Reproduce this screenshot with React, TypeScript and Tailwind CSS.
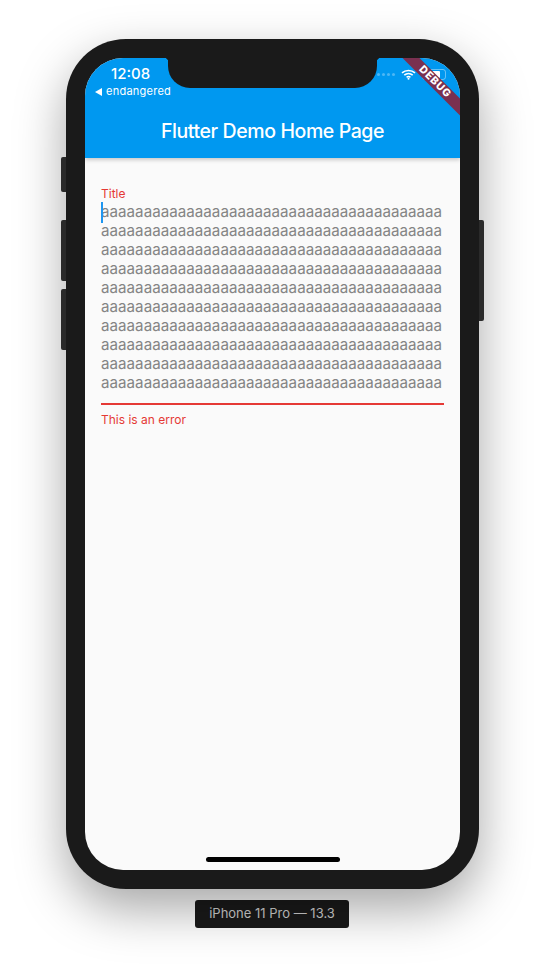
const rows = Array.from({ length: 10 }, () => "a".repeat(40));

function Wifi() {
  return (
    <svg width="15" height="11" viewBox="0 0 15 11" fill="none" stroke="white" strokeWidth="1.6">
      <path d="M1 3.9C4.6.6 10.4.6 14 3.9" />
      <path d="M3.3 6.2c2.4-2.1 6-2.1 8.4 0" />
      <path d="M5.6 8.3c1.1-.9 2.7-.9 3.8 0" />
      <circle cx="7.5" cy="9.7" r="1" fill="white" stroke="none" />
    </svg>
  );
}

export default function App() {
  return (
    <div className="relative h-[964px] w-[545px] overflow-hidden bg-white pl-[66px] pt-[39px] font-['Inter',sans-serif]">
      <div className="relative h-[850px] w-[413px] rounded-[60px] bg-[#1a1a1a] p-[19px] shadow-[0_20px_50px_rgba(0,0,0,0.35)]">
        {/* side buttons */}
        <div className="absolute -left-[5px] top-[118px] h-[35px] w-[5px] rounded-l-[2px] bg-[#2a2a2a]" />
        <div className="absolute -left-[5px] top-[181px] h-[61px] w-[5px] rounded-l-[2px] bg-[#2a2a2a]" />
        <div className="absolute -left-[5px] top-[250px] h-[61px] w-[5px] rounded-l-[2px] bg-[#2a2a2a]" />
        <div className="absolute -right-[5px] top-[181px] h-[101px] w-[5px] rounded-r-[2px] bg-[#2a2a2a]" />

        <div className="relative flex h-[812px] w-[375px] flex-col overflow-hidden rounded-[38px] bg-[#fafafa]">
          {/* notch */}
          <div className="absolute left-[83px] top-0 z-10 h-[30px] w-[209px] rounded-b-[22px] bg-[#1a1a1a]" />
          <div className="absolute left-[79px] top-0 z-10 h-[4px] w-[4px] rounded-tr-[4px] shadow-[2px_-2px_0_#1a1a1a]" />
          <div className="absolute left-[292px] top-0 z-10 h-[4px] w-[4px] rounded-tl-[4px] shadow-[-2px_-2px_0_#1a1a1a]" />

          <div className="relative h-[100px] shrink-0 bg-[#0098f0] shadow-[0_2px_4px_rgba(0,0,0,0.2)]">
            <div className="flex h-[56px] justify-between pl-[10px] pr-[14px] pt-[7px] text-white">
              <div className="flex flex-col">
                <span className="pl-[16px] text-[15px] font-medium leading-[18px]">12:08</span>
                <span className="mt-[1px] flex items-center gap-[4px] text-[11px] font-normal leading-[15px] tracking-[0.25px]">
                  <span className="h-0 w-0 border-y-[4px] border-r-[7px] border-y-transparent border-r-white" />
                  endangered
                </span>
              </div>
              <div className="flex h-[16px] items-center gap-[6px] pt-[2px]">
                <div className="flex gap-[2px]">
                  {[0, 1, 2, 3].map((i) => (
                    <span key={i} className="h-[3px] w-[3px] rounded-full bg-white/30" />
                  ))}
                </div>
                <Wifi />
                <div className="flex h-[11px] w-[24px] items-center rounded-[3px] border border-white/40 p-[1px]">
                  <div className="h-full w-[16px] rounded-[1px] bg-white" />
                </div>
              </div>
            </div>
            <div className="pt-[3px] text-center text-[19.5px] font-medium leading-[28px] tracking-[-0.4px] text-white">
              Flutter Demo Home Page
            </div>

            {/* debug banner */}
            <div className="absolute -right-[20px] top-[18px] flex h-[12px] w-[90px] rotate-45 items-center justify-center bg-[#7a3050] text-[10.5px] font-extrabold leading-none tracking-[0.8px] text-white">
              DEBUG
            </div>
          </div>

          <div className="px-[16px] pt-[29px]">
            <div className="text-[12px] leading-[14px] text-[#e53935]">Title</div>
            <div className="relative border-b-2 border-[#e53935] pb-[11px] pt-[1px]">
              <span className="absolute left-0 top-[1px] h-[21px] w-[2px] bg-[#1e96f0]" />
              {rows.map((row, i) => (
                <div key={i} className="h-[19px] text-[15.2px] leading-[19px] text-[#858585]">
                  {row}
                </div>
              ))}
            </div>
            <div className="pt-[8px] text-[12px] leading-[14px] text-[#e53935]">This is an error</div>
          </div>

          <div className="absolute bottom-[8px] left-[121px] h-[5px] w-[134px] rounded-full bg-black" />
        </div>
      </div>

      <div className="mt-[11px] ml-[129px] flex h-[28px] w-[154px] items-center justify-center rounded-[3px] bg-[#1a1a1a] text-[13px] font-normal text-[#d0d0d0]">
        iPhone 11 Pro — 13.3
      </div>
    </div>
  );
}
